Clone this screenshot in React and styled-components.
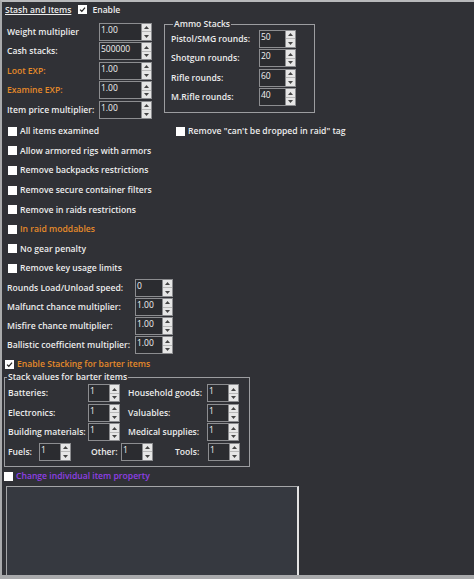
import React from 'react'
import styled, { createGlobalStyle } from 'styled-components'

const Global = createGlobalStyle`
  html, body { margin: 0; padding: 0; background: #303136; }
  * { box-sizing: border-box; }
`

const Panel = styled.div`
  width: 474px;
  height: 579px;
  overflow: hidden;
  background: #303136;
  border-top: 2px solid #b8b9bb;
  border-left: 2px solid #a9aaac;
  border-bottom: 4px solid #a9aaac;
  padding: 0 0 0 2px;
  display: flex;
  flex-direction: column;
  font-family: 'Open Sans', 'Noto Sans', sans-serif;
  font-size: 8.6px;
  font-weight: 600;
  color: #ececec;
`

const HeaderRow = styled.div`
  display: flex;
  align-items: center;
  height: 15px;
  gap: 3px;
  padding-left: 1px;
`

const Title = styled.span`
  text-decoration: underline;
  margin-right: 4px;
`

const Box = styled.span`
  display: inline-flex;
  align-items: center;
  justify-content: center;
  width: 9px;
  height: 9px;
  background: #ffffff;
  flex-shrink: 0;
  margin-right: ${p => p.$gap || 3}px;
`

const Check = ({ checked, gap }) => (
  <Box $gap={gap}>
    {checked && (
      <svg width="7" height="7" viewBox="0 0 10 10">
        <path d="M1.5 5.2 L4 7.6 L8.6 2.2" fill="none" stroke="#222" strokeWidth="1.8" />
      </svg>
    )}
  </Box>
)

const TopSection = styled.div`
  display: flex;
  align-items: flex-start;
  padding-top: 5px;
`

const LeftCol = styled.div`
  display: flex;
  flex-direction: column;
  padding-left: 3px;
`

const Field = styled.div`
  display: flex;
  align-items: center;
  height: ${p => p.$h || 19.5}px;
`

const Label = styled.span`
  width: ${p => p.$w}px;
  flex-shrink: 0;
  color: ${p => (p.$tone === 'orange' ? '#e58a2a' : p.$tone === 'purple' ? '#8f3fe6' : '#ececec')};
  white-space: nowrap;
`

const SpinWrap = styled.div`
  display: flex;
  width: ${p => p.$w}px;
  height: 18px;
  border: 1px solid #8c8d90;
  background: #2b2c30;
`

const SpinValue = styled.div`
  flex: 1;
  font-size: 8.5px;
  font-weight: 400;
  color: #f2f2f2;
  padding: 1px 0 0 1px;
  line-height: 10px;
  overflow: hidden;
`

const SpinButtons = styled.div`
  width: 10px;
  display: flex;
  flex-direction: column;
  background: #e6e6e6;
  border-left: 1px solid #8c8d90;
`

const SpinHalf = styled.div`
  flex: 1;
  display: flex;
  align-items: center;
  justify-content: center;
  &:first-child { border-bottom: 1px solid #b8b8b8; }
`

const Arrow = ({ down }) => (
  <svg width="5" height="3" viewBox="0 0 5 3">
    <path d={down ? 'M0 0 L5 0 L2.5 3 Z' : 'M0 3 L5 3 L2.5 0 Z'} fill="#444" />
  </svg>
)

const Spin = ({ value, w }) => (
  <SpinWrap $w={w}>
    <SpinValue>{value}</SpinValue>
    <SpinButtons>
      <SpinHalf><Arrow /></SpinHalf>
      <SpinHalf><Arrow down /></SpinHalf>
    </SpinButtons>
  </SpinWrap>
)

const Group = styled.fieldset`
  margin: ${p => p.$m};
  padding: ${p => p.$p};
  border: 1px solid #9c9da0;
  width: ${p => p.$w}px;
  min-width: 0;
`

const Legend = styled.legend`
  padding: 0 1px;
  margin-left: 2px;
  line-height: 9px;
`

const CheckList = styled.div`
  display: grid;
  grid-template-columns: 168px 1fr;
  padding-left: 4px;
  margin-top: 2px;
`

const CheckRow = styled.div`
  display: flex;
  align-items: center;
  height: ${p => p.$h || 19.6}px;
  padding-left: ${p => p.$pl || 0}px;
  grid-column: ${p => p.$col || 'auto'};
`

const NumList = styled.div`
  display: flex;
  flex-direction: column;
  padding-left: 3px;
`

const BarterGrid = styled.div`
  display: grid;
  grid-template-columns: 120px 1fr;
  padding-left: 3px;
`

const LastRow = styled.div`
  display: flex;
  align-items: center;
  height: 19.5px;
  grid-column: 1 / span 2;
`

const ItemBox = styled.div`
  flex: 1;
  width: 293px;
  margin-left: 2px;
  background: #363940;
  border: 1px solid #a5a6a8;
  border-right: 2px solid #e4e4e4;
  border-bottom: none;
`

const checks = [
  ['Allow armored rigs with armors'],
  ['Remove backpacks restrictions'],
  ['Remove secure container filters'],
  ['Remove in raids restrictions'],
  ['In raid moddables', 'orange'],
  ['No gear penalty'],
  ['Remove key usage limits'],
]

export default function App() {
  return (
    <Panel>
      <Global />
      <HeaderRow>
        <Title>Stash and Items</Title>
        <Check checked gap={2} />
        <span>Enable</span>
      </HeaderRow>
      <TopSection>
        <LeftCol>
          <Field><Label $w={92}>Weight multiplier</Label><Spin w={53} value="1.00" /></Field>
          <Field><Label $w={92}>Cash stacks:</Label><Spin w={53} value="500000" /></Field>
          <Field><Label $w={92} $tone="orange">Loot EXP:</Label><Spin w={53} value="1.00" /></Field>
          <Field><Label $w={92} $tone="orange">Examine EXP:</Label><Spin w={53} value="1.00" /></Field>
          <Field><Label $w={92}>Item price multiplier:</Label><Spin w={53} value="1.00" /></Field>
        </LeftCol>
        <Group $w={151} $m="-2px 0 0 12px" $p="0 0 5px 6px">
          <Legend>Ammo Stacks</Legend>
          <Field><Label $w={88}>Pistol/SMG rounds:</Label><Spin w={37} value="50" /></Field>
          <Field><Label $w={88}>Shotgun rounds:</Label><Spin w={37} value="20" /></Field>
          <Field><Label $w={88}>Rifle rounds:</Label><Spin w={37} value="60" /></Field>
          <Field><Label $w={88}>M.Rifle rounds:</Label><Spin w={37} value="40" /></Field>
        </Group>
      </TopSection>
      <CheckList>
        <CheckRow><Check /><Label>All items examined</Label></CheckRow>
        <CheckRow><Check /><Label>Remove "can't be dropped in raid" tag</Label></CheckRow>
        {checks.map(([text, tone]) => (
          <CheckRow key={text} $col="1"><Check /><Label $tone={tone}>{text}</Label></CheckRow>
        ))}
      </CheckList>
      <NumList>
        <Field $h={19.2}><Label $w={128}>Rounds Load/Unload speed:</Label><Spin w={38} value="0" /></Field>
        <Field $h={19.2}><Label $w={128}>Malfunct chance multiplier:</Label><Spin w={38} value="1.00" /></Field>
        <Field $h={19.2}><Label $w={128}>Misfire chance multiplier:</Label><Spin w={38} value="1.00" /></Field>
        <Field $h={19.2}><Label $w={128}>Ballistic coefficient multiplier:</Label><Spin w={38} value="1.00" /></Field>
      </NumList>
      <CheckRow $pl={1} $h={18.5}>
        <Check checked /><Label $tone="orange">Enable Stacking for barter items</Label>
      </CheckRow>
      <Group $w={246} $m="-1px 0 0 0" $p="2px 0 4px 0">
        <Legend>Stack values for barter items</Legend>
        <BarterGrid>
          <Field><Label $w={80}>Batteries:</Label><Spin w={32} value="1" /></Field>
          <Field><Label $w={79}>Household goods:</Label><Spin w={32} value="1" /></Field>
          <Field><Label $w={80}>Electronics:</Label><Spin w={32} value="1" /></Field>
          <Field><Label $w={79}>Valuables:</Label><Spin w={32} value="1" /></Field>
          <Field><Label $w={80}>Building materials:</Label><Spin w={32} value="1" /></Field>
          <Field><Label $w={79}>Medical supplies:</Label><Spin w={32} value="1" /></Field>
          <LastRow>
            <Label $w={31}>Fuels:</Label><Spin w={32} value="1" />
            <Label $w={30} style={{ marginLeft: 20 }}>Other:</Label><Spin w={32} value="1" />
            <Label $w={33} style={{ marginLeft: 22 }}>Tools:</Label><Spin w={32} value="1" />
          </LastRow>
        </BarterGrid>
      </Group>
      <CheckRow $h={19}>
        <Check /><Label $tone="purple">Change individual item property</Label>
      </CheckRow>
      <ItemBox />
    </Panel>
  )
}
